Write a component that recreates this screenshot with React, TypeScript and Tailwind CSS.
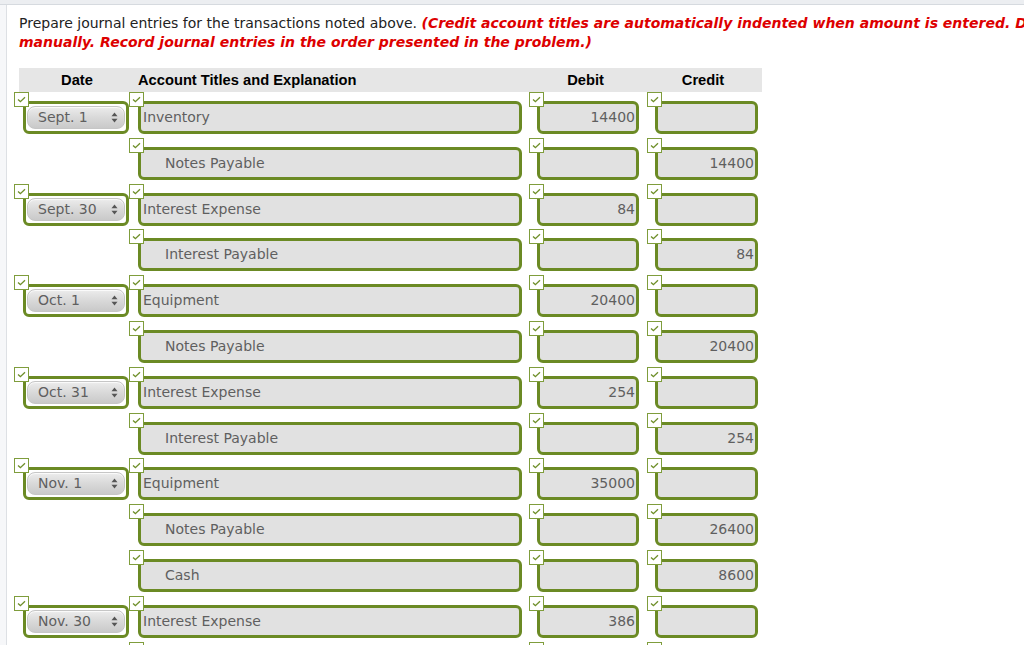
import type { ReactNode } from "react"

type Row = {
  date?: string
  account: string
  credit?: boolean
  amount: string
}

const rows: Row[] = [
  { date: "Sept. 1", account: "Inventory", amount: "14400" },
  { account: "Notes Payable", credit: true, amount: "14400" },
  { date: "Sept. 30", account: "Interest Expense", amount: "84" },
  { account: "Interest Payable", credit: true, amount: "84" },
  { date: "Oct. 1", account: "Equipment", amount: "20400" },
  { account: "Notes Payable", credit: true, amount: "20400" },
  { date: "Oct. 31", account: "Interest Expense", amount: "254" },
  { account: "Interest Payable", credit: true, amount: "254" },
  { date: "Nov. 1", account: "Equipment", amount: "35000" },
  { account: "Notes Payable", credit: true, amount: "26400" },
  { account: "Cash", credit: true, amount: "8600" },
  { date: "Nov. 30", account: "Interest Expense", amount: "386" },
  { account: "Interest Payable", credit: true, amount: "386" },
]

function Check() {
  return (
    <span className="absolute left-0 top-0 z-10 flex h-[15px] w-[15px] items-center justify-center border border-[#7f9d3c] bg-white">
      <svg width="9" height="7" viewBox="0 0 9 7" fill="none">
        <path d="M1 3.5 L3.4 5.6 L8 1.2" stroke="#6f8f2a" strokeWidth="1.3" />
      </svg>
    </span>
  )
}

function Cell({ pad, children }: { pad: string; children: ReactNode }) {
  return (
    <div className={`relative pt-[9px] ${pad}`}>
      <Check />
      {children}
    </div>
  )
}

function Frame({ width, children, className = "" }: { width: string; children?: ReactNode; className?: string }) {
  return (
    <div
      className={`flex h-[33px] items-center rounded-[6px] border-[3px] border-[#6b8a24] ${width} ${className}`}
    >
      {children}
    </div>
  )
}

function DateSelect({ value }: { value: string }) {
  return (
    <div className="flex h-[23px] w-[98px] items-center justify-between rounded-[8px] border border-[#c6c6c6] bg-gradient-to-b from-[#ececec] via-[#d9d9d9] to-[#c9c9c9] pl-[10px] pr-[6px] shadow-[inset_0_1px_1px_rgba(255,255,255,0.8)]">
      <span>{value}</span>
      <svg width="7" height="11" viewBox="0 0 7 11">
        <path d="M3.5 0.5 L6.5 4.2 H0.5 Z" fill="#555" />
        <path d="M3.5 10.5 L6.5 6.8 H0.5 Z" fill="#555" />
      </svg>
    </div>
  )
}

export default function App() {
  return (
    <div className="h-[645px] overflow-hidden bg-[#f6f7f9] font-['DejaVu_Sans',sans-serif]">
      <div className="h-[5px] border-b border-[#d6dadf] bg-[#eceef1]" />
      <div className="flex">
        <div className="w-[6px] shrink-0" />
        <main className="h-[640px] flex-1 overflow-hidden border-l border-[#dde0e4] bg-white">
          <p className="whitespace-nowrap pl-[12px] pt-[9px] text-[14px] leading-[19px] text-[#222]">
            Prepare journal entries for the transactions noted above.{" "}
            <b className="italic text-[#dd0000]">
              (Credit account titles are automatically indented when amount is entered. Do not indent
            </b>
            <br />
            <b className="italic text-[#dd0000]">
              manually. Record journal entries in the order presented in the problem.)
            </b>
          </p>

          <div className="ml-[12px] mt-[16px] flex h-[24px] w-[743px] items-center bg-[#e6e6e6] font-['Liberation_Sans',sans-serif] text-[14.7px] font-bold text-black">
            <div className="w-[116px] text-center">Date</div>
            <div className="w-[392px] pl-[3px]">Account Titles and Explanation</div>
            <div className="w-[117px] text-center">Debit</div>
            <div className="w-[118px] text-center">Credit</div>
          </div>

          <div className="pl-[7px] text-[14px] text-[#5f5f5f]">
            {rows.map((r, i) => (
              <div key={i} className="flex h-[45.8px]">
                <div className="w-[115px]">
                  {r.date && (
                    <Cell pad="pl-[9px]">
                      <Frame width="w-[106px]" className="bg-white pl-[1px]">
                        <DateSelect value={r.date} />
                      </Frame>
                    </Cell>
                  )}
                </div>
                <Cell pad="pl-[9px]">
                  <Frame
                    width="w-[384px]"
                    className={`bg-[#e1e1e1] ${r.credit ? "pl-[24px]" : "pl-[2px]"}`}
                  >
                    {r.account}
                  </Frame>
                </Cell>
                <div className="w-[7px]" />
                <Cell pad="pl-[8px]">
                  <Frame width="w-[102px]" className="justify-end bg-[#e1e1e1] pr-[1px]">
                    {r.credit ? "" : r.amount}
                  </Frame>
                </Cell>
                <div className="w-[8px]" />
                <Cell pad="pl-[8px]">
                  <Frame width="w-[103px]" className="justify-end bg-[#e1e1e1] pr-[1px]">
                    {r.credit ? r.amount : ""}
                  </Frame>
                </Cell>
              </div>
            ))}
          </div>
        </main>
      </div>
    </div>
  )
}
